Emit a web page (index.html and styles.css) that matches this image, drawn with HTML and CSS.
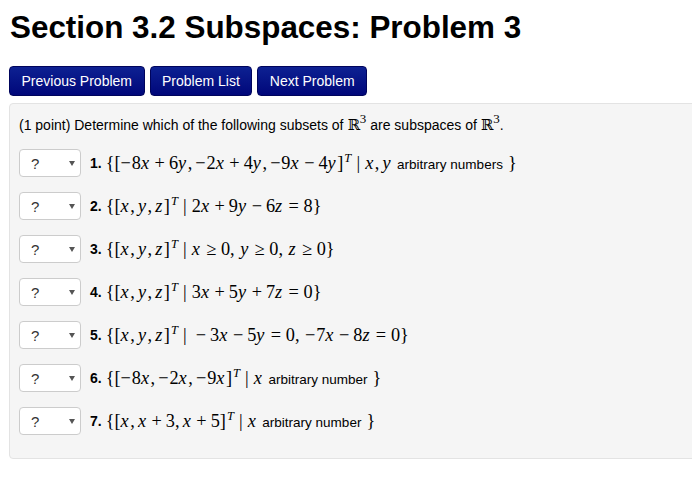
FILE: index.html
```html
<!DOCTYPE html>
<html lang="en">
<head>
  <meta charset="UTF-8">
  <meta name="viewport" content="width=device-width, initial-scale=1.0">
  <title>Section 3.2 Subspaces: Problem 3</title>
  <link rel="stylesheet" href="styles.css">
</head>
<body>
  <div class="page">
    <h1>Section 3.2 Subspaces: Problem 3</h1>

    <div class="nav">
      <a class="nav-btn" href="#">Previous Problem</a>
      <a class="nav-btn" href="#">Problem List</a>
      <a class="nav-btn" href="#">Next Problem</a>
    </div>

    <div class="problem">
      <p class="intro">(1 point) Determine which of the following subsets of <span class="math"><span class="bb">ℝ</span><sup class="pow">3</sup></span> are subspaces of <span class="math"><span class="bb">ℝ</span><sup class="pow">3</sup></span>.</p>

      <div class="item">
        <span class="select"><span class="q">?</span><span class="arrow"></span></span>
        <b class="num">1.</b>
        <span class="math">{[<span class="bin-u">−</span>8<i>x</i><span class="bin">+</span>6<i>y</i><span class="c">,</span><span class="bin-u">−</span>2<i>x</i><span class="bin">+</span>4<i>y</i><span class="c">,</span><span class="bin-u">−</span>9<i>x</i><span class="bin">−</span>4<i>y</i>]<sup class="t">T</sup><span class="mid">|</span><i>x</i><span class="c">,</span><i>y</i><span class="txt">arbitrary numbers</span>}</span>
      </div>

      <div class="item">
        <span class="select"><span class="q">?</span><span class="arrow"></span></span>
        <b class="num">2.</b>
        <span class="math">{[<i>x</i><span class="c">,</span><i>y</i><span class="c">,</span><i>z</i>]<sup class="t">T</sup><span class="mid">|</span>2<i>x</i><span class="bin">+</span>9<i>y</i><span class="bin">−</span>6<i>z</i><span class="rel">=</span>8}</span>
      </div>

      <div class="item">
        <span class="select"><span class="q">?</span><span class="arrow"></span></span>
        <b class="num">3.</b>
        <span class="math">{[<i>x</i><span class="c">,</span><i>y</i><span class="c">,</span><i>z</i>]<sup class="t">T</sup><span class="mid">|</span><i>x</i><span class="rel">≥</span>0<span class="c wide">,</span><i>y</i><span class="rel">≥</span>0<span class="c wide">,</span><i>z</i><span class="rel">≥</span>0}</span>
      </div>

      <div class="item">
        <span class="select"><span class="q">?</span><span class="arrow"></span></span>
        <b class="num">4.</b>
        <span class="math">{[<i>x</i><span class="c">,</span><i>y</i><span class="c">,</span><i>z</i>]<sup class="t">T</sup><span class="mid">|</span>3<i>x</i><span class="bin">+</span>5<i>y</i><span class="bin">+</span>7<i>z</i><span class="rel">=</span>0}</span>
      </div>

      <div class="item">
        <span class="select"><span class="q">?</span><span class="arrow"></span></span>
        <b class="num">5.</b>
        <span class="math">{[<i>x</i><span class="c">,</span><i>y</i><span class="c">,</span><i>z</i>]<sup class="t">T</sup><span class="mid">|</span><span class="bin">−</span>3<i>x</i><span class="bin">−</span>5<i>y</i><span class="rel">=</span>0<span class="c wide">,</span><span class="bin-u">−</span>7<i>x</i><span class="bin">−</span>8<i>z</i><span class="rel">=</span>0}</span>
      </div>

      <div class="item">
        <span class="select"><span class="q">?</span><span class="arrow"></span></span>
        <b class="num">6.</b>
        <span class="math">{[<span class="bin-u">−</span>8<i>x</i><span class="c">,</span><span class="bin-u">−</span>2<i>x</i><span class="c">,</span><span class="bin-u">−</span>9<i>x</i>]<sup class="t">T</sup><span class="mid">|</span><i>x</i><span class="txt">arbitrary number</span>}</span>
      </div>

      <div class="item">
        <span class="select"><span class="q">?</span><span class="arrow"></span></span>
        <b class="num">7.</b>
        <span class="math">{[<i>x</i><span class="c">,</span><i>x</i><span class="bin">+</span>3<span class="c">,</span><i>x</i><span class="bin">+</span>5]<sup class="t">T</sup><span class="mid">|</span><i>x</i><span class="txt">arbitrary number</span>}</span>
      </div>
    </div>
  </div>
</body>
</html>
```

FILE: styles.css
```css
html, body {
  margin: 0;
  padding: 0;
  background: #fff;
  overflow: hidden;
}
body {
  font-family: "Liberation Sans", Arial, sans-serif;
  font-size: 14px;
  color: #000;
}
.page {
  width: 720px;
  padding-left: 9px;
}
h1 {
  margin: 8px 0 0 1px;
  font-size: 31.4px;
  line-height: 40px;
  font-weight: bold;
}
.nav {
  display: flex;
  gap: 5px;
  margin-top: 18px;
}
.nav-btn {
  display: block;
  padding: 6px 11.5px;
  line-height: 16px;
  color: #fff;
  text-decoration: none;
  background: linear-gradient(#0d2192, #00077a);
  border: 1px solid #00045c;
  border-radius: 4px;
}
.problem {
  margin-top: 7px;
  padding: 10px 9px 23px;
  background: #f5f5f5;
  border: 1px solid #e3e3e3;
  border-radius: 4px;
}
.intro {
  margin: 0 0 14px;
  line-height: 20px;
}
.item {
  display: flex;
  align-items: center;
  height: 28px;
  margin-bottom: 15px;
}
.item:last-child {
  margin-bottom: 0;
}
.select {
  display: flex;
  align-items: center;
  box-sizing: border-box;
  width: 62px;
  height: 28px;
  padding: 0 0 0 11px;
  background: #fff;
  border: 1px solid #ccc;
  border-radius: 4px;
  color: #333;
  font-size: 15px;
}
.q {
  flex: 1;
}
.arrow {
  width: 0;
  height: 0;
  margin-right: 5px;
  border-left: 3px solid transparent;
  border-right: 3px solid transparent;
  border-top: 5px solid #555;
}
.num {
  margin-left: 9px;
  margin-right: 4px;
  font-size: 14px;
}
.math {
  font-family: "Liberation Serif", "DejaVu Serif", serif;
  font-size: 18.3px;
  white-space: nowrap;
}
.math i {
  font-style: italic;
  padding-right: 1.5px;
}
.bin {
  margin: 0 0.22em;
}
.bin-u {
  margin-right: 0.05em;
}
.rel {
  margin: 0 0.26em;
}
.mid {
  margin: 0 0.28em;
}
.c {
  margin-right: 0.17em;
}
.c.wide {
  margin-right: 0.3em;
}
.t {
  font-style: italic;
  font-size: 12.5px;
  vertical-align: 7px;
  line-height: 0;
  margin-left: 1px;
}
.pow {
  font-size: 13px;
  vertical-align: 7px;
  line-height: 0;
}
.bb {
  font-family: "DejaVu Serif", serif;
  font-size: 15px;
}
.txt {
  font-family: "Liberation Sans", Arial, sans-serif;
  font-size: 13.5px;
  margin: 0 5px 0 5px;
}
```
